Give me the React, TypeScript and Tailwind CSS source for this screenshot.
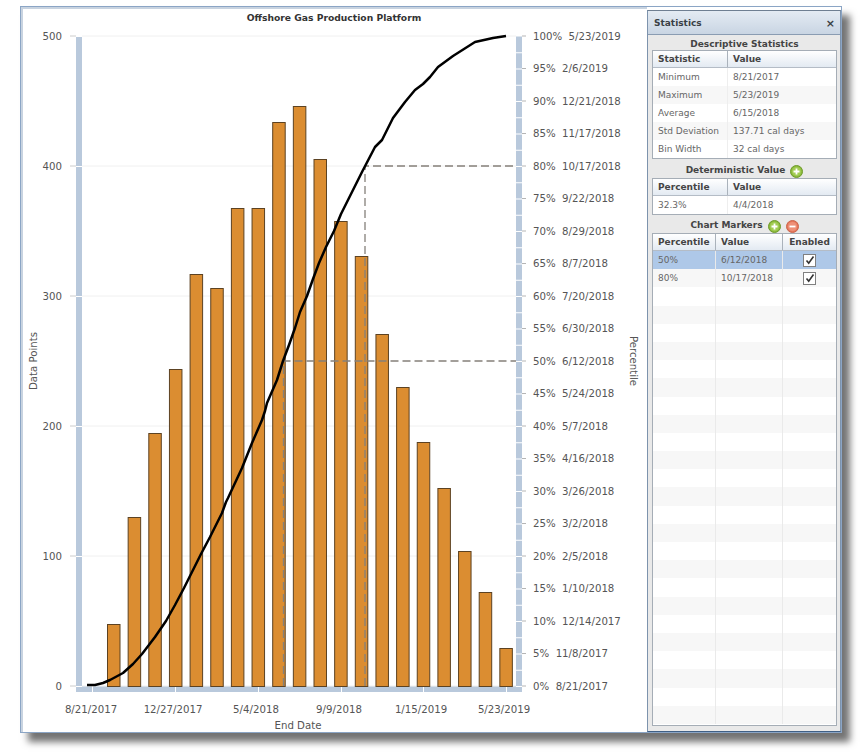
const font = { fontFamily: '"DejaVu Sans", Verdana, sans-serif' }

const barTops = [624, 517, 433, 369, 274, 288, 208, 208, 122, 106, 159, 221, 256, 334, 387, 442, 488, 551, 592, 648]
const yLabels = [500, 400, 300, 200, 100, 0]
const xLabels = [
  { x: 91, label: '8/21/2017' },
  { x: 173, label: '12/27/2017' },
  { x: 256, label: '5/4/2018' },
  { x: 339, label: '9/9/2018' },
  { x: 421, label: '1/15/2019' },
  { x: 504, label: '5/23/2019' },
]
const pctDates = [
  '8/21/2017', '11/8/2017', '12/14/2017', '1/10/2018', '2/5/2018', '3/2/2018', '3/26/2018',
  '4/16/2018', '5/7/2018', '5/24/2018', '6/12/2018', '6/30/2018', '7/20/2018', '8/7/2018',
  '8/29/2018', '9/22/2018', '10/17/2018', '11/17/2018', '12/21/2018', '2/6/2019', '5/23/2019',
]
const curve =
  '87,685 95,685 103,683 110,680 123,673 133,664 142,654 155,637 166,621 175,605 184,588 193,570 ' +
  '201,554 210,537 222,513 226,502 228,498 235,483 242,468 252,443 262,420 265,411 267,403 277,380 ' +
  '283,361 289,345 295,328 300,312 307,296 313,279 319,263 326,247 334,231 341,214 349,198 357,182 ' +
  '362,172 375,147 382,140 393,118 405,102 415,90 423,84 430,77 438,67 453,56 475,42 493,38 506,36'

const yOf = (p: number) => 686 - p * 6.5

function Chart() {
  return (
    <svg className="block w-[624px] h-[723px]" viewBox="23 9 624 723" style={font}>
      <text x="334" y="21" textAnchor="middle" fontSize="9.2" fontWeight="700" fill="#333">
        Offshore Gas Production Platform
      </text>

      {yLabels.map((v) => {
        const y = 686 - v * 1.3
        return (
          <g key={v}>
            <line x1="82" x2="516" y1={y} y2={y} stroke="#f0f0f0" />
            <line x1="70" x2="76" y1={y} y2={y} stroke="#ccc" />
            <text x="62" y={y + 3.5} textAnchor="end" fontSize="10.2" fill="#555">{v}</text>
          </g>
        )
      })}

      {/* axis bands */}
      <rect x="76" y="36.5" width="6" height="655.5" fill="#b9c9dc" />
      <rect x="516" y="36.5" width="6" height="655.5" fill="#b9c9dc" />
      <rect x="76" y="686.5" width="446" height="5.5" fill="#b9c9dc" />
      {yLabels.map((v) => (
        <rect key={v} x="76" y={686 - v * 1.3} width="6" height="1" fill="#fff" />
      ))}
      {[92, 175, 258, 341, 423, 506].map((x) => (
        <rect key={x} x={x} y="686" width="1" height="6" fill="#fff" />
      ))}
      {Array.from({ length: 40 }, (_, i) => (
        <rect key={i} x="516" y={yOf(i * 2.5)} width="6" height="1" fill="#fff" />
      ))}

      {barTops.map((top, i) => (
        <rect
          key={i}
          x={107.5 + i * 20.65}
          y={top + 0.5}
          width="12.5"
          height={686 - top}
          fill="#db8d31"
          stroke="#5c4222"
        />
      ))}

      {/* marker lines */}
      <g stroke="#85807a" strokeWidth="1.3" strokeDasharray="8 4" fill="none">
        <path d="M283.5 686V361H516" />
        <path d="M365 686V166H516" />
      </g>

      <polyline points={curve} fill="none" stroke="#000" strokeWidth="2.5" strokeLinejoin="round" />

      {pctDates.map((d, i) => {
        const y = yOf(i * 5)
        return (
          <g key={d}>
            <line x1="522" x2="526" y1={y} y2={y} stroke="#b5b5b5" />
            <text x="533" y={y + 3.5} fontSize="10.2" fill="#555" style={{ whiteSpace: 'pre' }}>
              {`${i * 5}%  ${d}`}
            </text>
          </g>
        )
      })}

      {xLabels.map((l) => (
        <text key={l.label} x={l.x} y="713" textAnchor="middle" fontSize="10.2" fill="#555">{l.label}</text>
      ))}
      <text x="298" y="729" textAnchor="middle" fontSize="10.2" fill="#555">End Date</text>
      <text transform="translate(37 361) rotate(-90)" textAnchor="middle" fontSize="10.2" fill="#555">Data Points</text>
      <text transform="translate(630 361) rotate(90)" textAnchor="middle" fontSize="10.2" fill="#555">Percentile</text>
    </svg>
  )
}

function RoundIcon({ kind }: { kind: 'plus' | 'minus' }) {
  const isPlus = kind === 'plus'
  return (
    <svg width="13" height="13" viewBox="0 0 13 13" className="shrink-0">
      <circle cx="6.5" cy="6.5" r="6" fill={isPlus ? '#8cbb3c' : '#e5765a'} stroke={isPlus ? '#6f9a2c' : '#c9654d'} />
      <circle cx="6.5" cy="6.5" r="4.5" fill={isPlus ? '#a3cc55' : '#ee9078'} />
      <path d={isPlus ? 'M6.5 3.5v6M3.5 6.5h6' : 'M3.5 6.5h6'} stroke="#fff" strokeWidth="1.8" />
    </svg>
  )
}

function Checked() {
  return (
    <svg width="13" height="13" viewBox="0 0 13 13">
      <rect x="0.5" y="0.5" width="12" height="12" fill="#fff" stroke="#808080" />
      <path d="M3.5 6.5l2.2 2.6L10.5 2.5" fill="none" stroke="#333" strokeWidth="1.6" />
    </svg>
  )
}

function GroupTitle({ children, className }: { children: React.ReactNode; className: string }) {
  return (
    <div className={`flex shrink-0 items-center justify-center gap-[5px] text-[9px] font-bold text-[#444] ${className}`}>
      {children}
    </div>
  )
}

function HeadCell({ label, className = '' }: { label: string; className?: string }) {
  return (
    <div className={`flex items-center pt-[1px] px-[5px] border-r border-[#aab2bb] last:border-r-0 ${className}`}>
      {label}
    </div>
  )
}

function GridHead({ children }: { children: React.ReactNode }) {
  return (
    <div className="flex h-[17px] shrink-0 border-b border-[#b4bcc6] bg-gradient-to-b from-white to-[#e3eaf2] text-[9px] font-bold text-[#444]">
      {children}
    </div>
  )
}

function Row({ a, b, index, w }: { a: string; b: string; index: number; w: string }) {
  return (
    <div className={`flex h-[18px] items-center ${index % 2 ? 'bg-[#f7f7f7]' : 'bg-white'}`}>
      <div className={`${w} pt-[1px] px-[5px] h-full flex items-center border-r border-[#eee]`}>{a}</div>
      <div className="flex-1 pt-[1px] px-[5px]">{b}</div>
    </div>
  )
}

const stats = [
  ['Minimum', '8/21/2017'],
  ['Maximum', '5/23/2019'],
  ['Average', '6/15/2018'],
  ['Std Deviation', '137.71 cal days'],
  ['Bin Width', '32 cal days'],
]
const markers = Array.from({ length: 26 }, (_, i) =>
  i === 0 ? ['50%', '6/12/2018'] : i === 1 ? ['80%', '10/17/2018'] : null,
)

function StatisticsPanel() {
  return (
    <div className="w-[194px] shrink-0 mt-[3px] flex flex-col border border-[#7d93ad] border-t-[#6f7f92] border-b-[#3f5f85] bg-[#e9e9e9]" style={font}>
      <div className="h-[24px] shrink-0 flex items-center justify-between pt-[2px] pl-[6px] pr-[5px] bg-gradient-to-b from-[#e4ebf3] to-[#c9d5e3] border-b border-[#8a9cb2] text-[9px] font-bold text-[#3a3f45]">
        <span>Statistics</span>
        <span className="text-[11px] leading-none">×</span>
      </div>

      <div className="flex-1 min-h-0 flex flex-col pl-[4px] pr-[3px] pb-[5px] text-[9px] text-[#666]">
        <GroupTitle className="h-[15px] pt-[4px]">Descriptive Statistics</GroupTitle>
        <div className="border border-[#a5adb6] bg-white">
          <GridHead>
            <HeadCell label="Statistic" className="w-[75px]" />
            <HeadCell label="Value" className="flex-1" />
          </GridHead>
          {stats.map(([a, b], i) => (
            <Row key={a} a={a} b={b} index={i} w="w-[75px]" />
          ))}
        </div>

        <GroupTitle className="h-[19px] pt-[5px]">
          Deterministic Value <RoundIcon kind="plus" />
        </GroupTitle>
        <div className="border border-[#a5adb6] bg-white">
          <GridHead>
            <HeadCell label="Percentile" className="w-[75px]" />
            <HeadCell label="Value" className="flex-1" />
          </GridHead>
          <Row a="32.3%" b="4/4/2018" index={0} w="w-[75px]" />
        </div>

        <GroupTitle className="h-[18px] pt-[4px]">
          Chart Markers <RoundIcon kind="plus" /> <RoundIcon kind="minus" />
        </GroupTitle>
        <div className="flex-1 min-h-0 overflow-hidden border border-[#a5adb6] bg-white">
          <GridHead>
            <HeadCell label="Percentile" className="w-[63px]" />
            <HeadCell label="Value" className="w-[67px]" />
            <HeadCell label="Enabled" className="flex-1 justify-center" />
          </GridHead>
          {markers.map((m, i) => (
            <div
              key={i}
              className={`flex h-[18.2px] items-center ${i === 0 ? 'bg-[#aec8e8]' : i % 2 ? 'bg-[#f7f7f7]' : 'bg-white'}`}
            >
              <div className="w-[63px] h-full pt-[1px] px-[5px] flex items-center border-r border-[#eaeaea]">{m?.[0]}</div>
              <div className="w-[67px] h-full pt-[1px] px-[5px] flex items-center border-r border-[#eaeaea]">{m?.[1]}</div>
              <div className="flex-1 flex justify-center pr-[1px]">{m && <Checked />}</div>
            </div>
          ))}
        </div>
      </div>
    </div>
  )
}

export default function App() {
  return (
    <div className="w-[864px] h-[755px] bg-white pl-[20px] pt-[6px] overflow-hidden">
      <div className="w-[822px] h-[727px] flex border border-[#8ba5c5] bg-white shadow-[8px_9px_7px_rgba(0,0,0,0.55)]">
        <div className="w-[626px] shrink-0 border-l-2 border-t-2 border-[#c8d3e0]">
          <Chart />
        </div>
        <StatisticsPanel />
      </div>
    </div>
  )
}
